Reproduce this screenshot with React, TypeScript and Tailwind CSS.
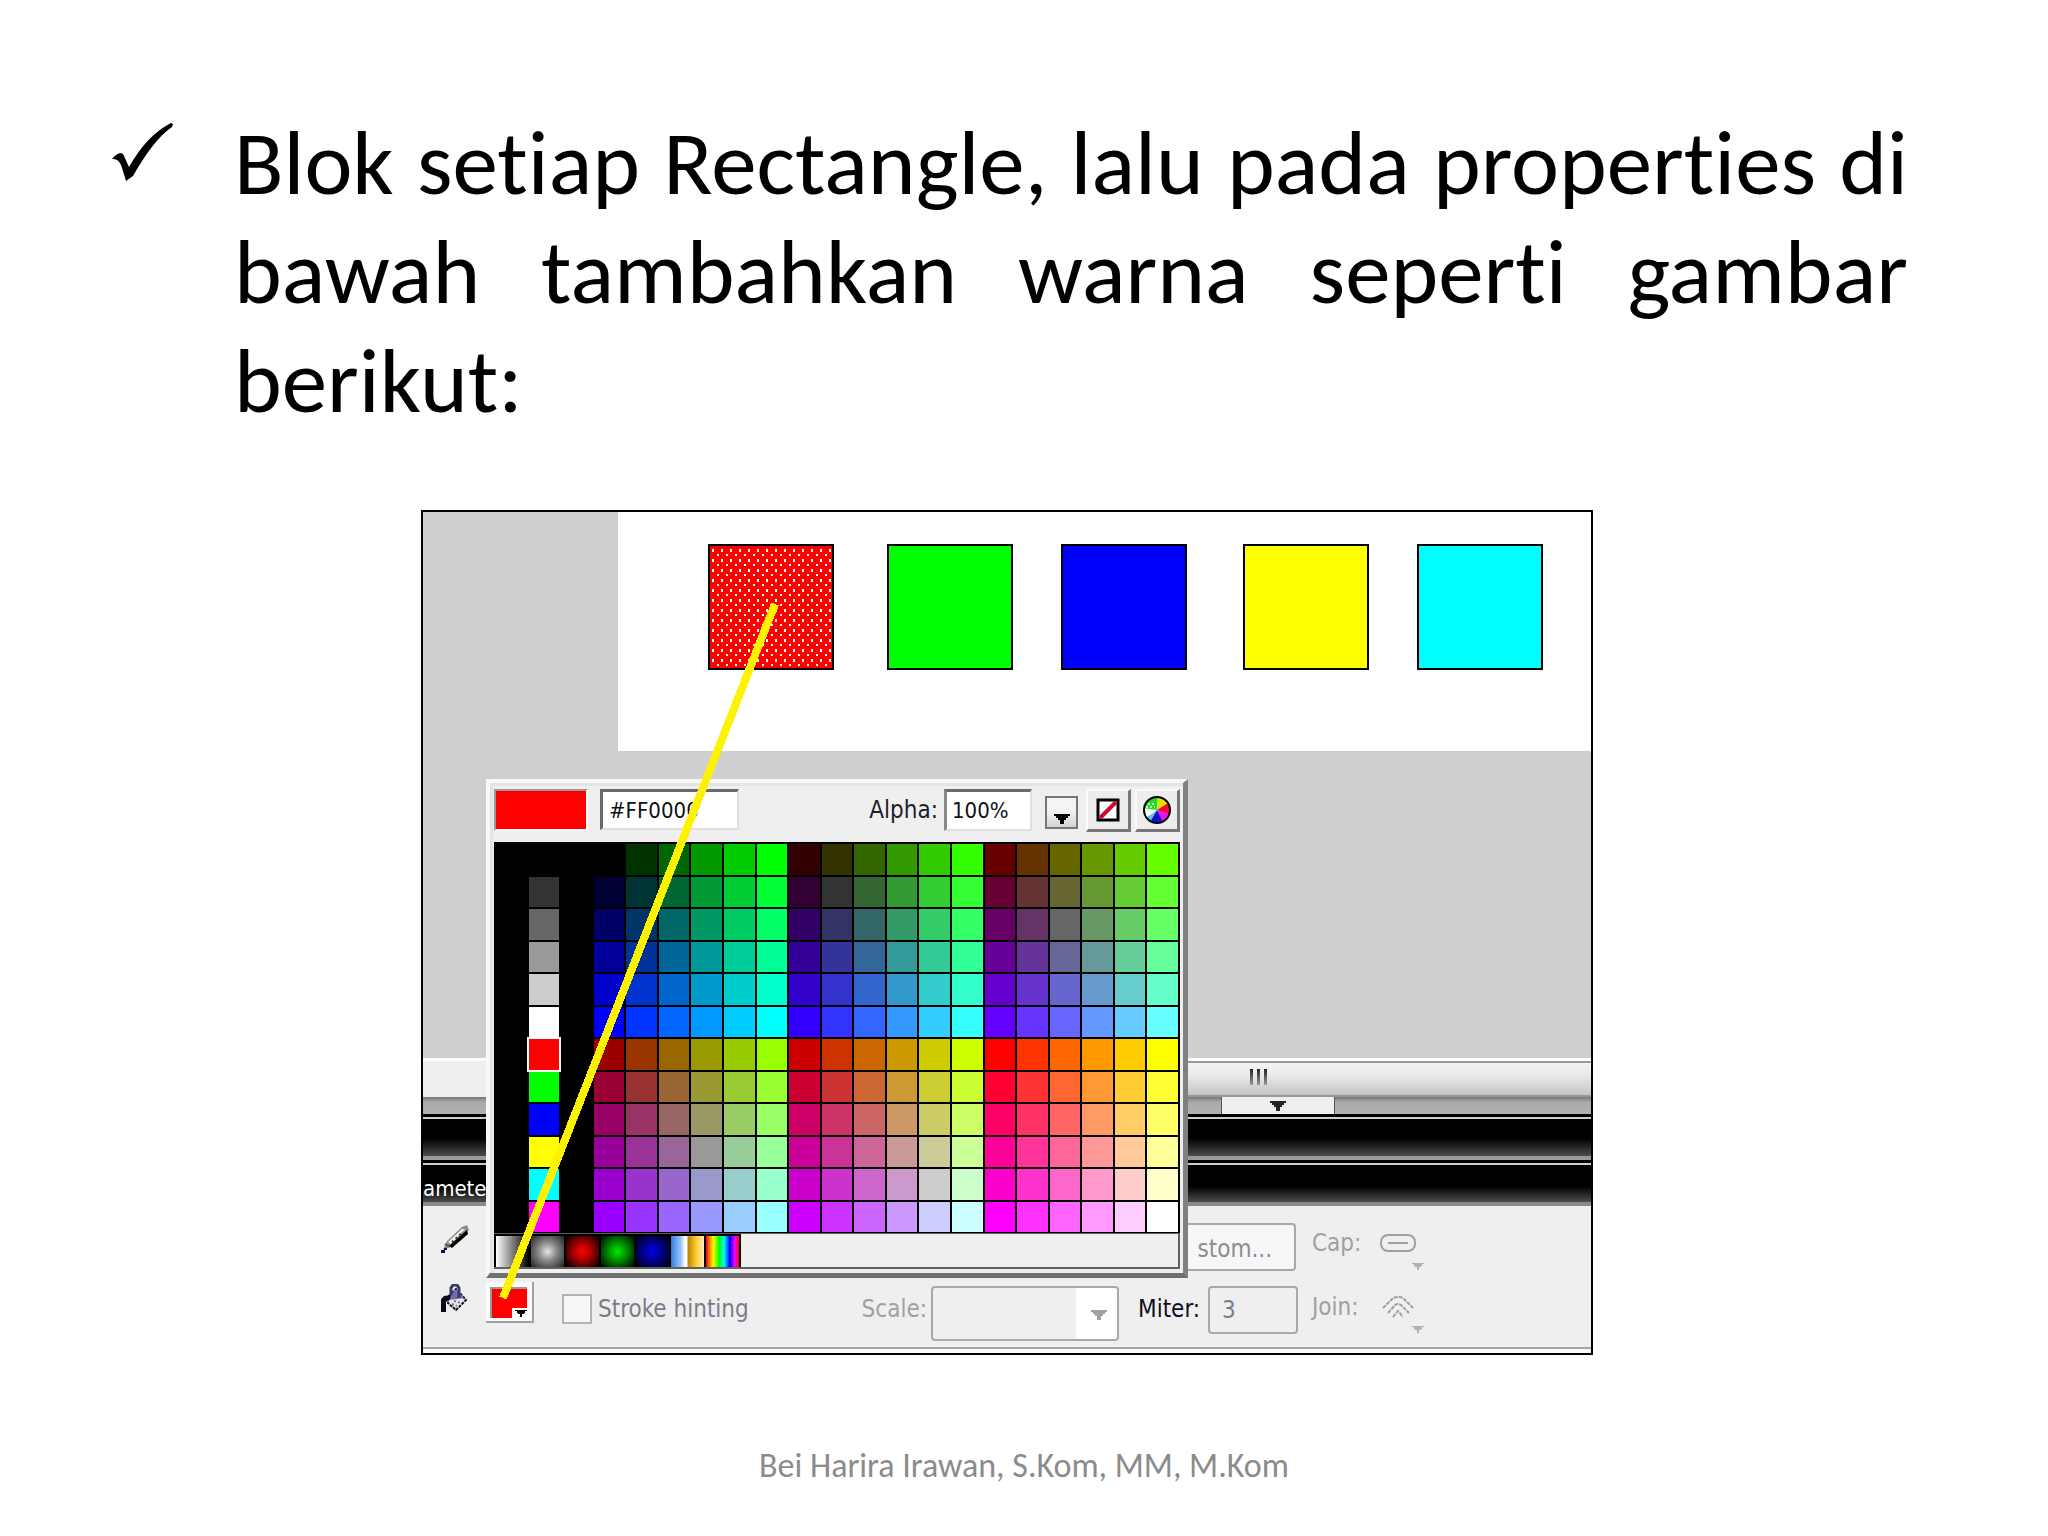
import type { ReactNode } from "react";

const LEVELS = ["00", "33", "66", "99", "CC", "FF"];
const SIDE = [
  "#000000", "#333333", "#666666", "#999999", "#CCCCCC", "#FFFFFF",
  "#FF0000", "#00FF00", "#0000FF", "#FFFF00", "#00FFFF", "#FF00FF",
];

function swatchAt(row: number, col: number): string {
  if (col === 0 || col === 2) return "#000000";
  if (col === 1) return SIDE[row];
  const c = col - 3;
  const red = LEVELS[Math.floor(c / 6) + (row >= 6 ? 3 : 0)];
  return `#${red}${LEVELS[c % 6]}${LEVELS[row % 6]}`;
}

const CELLS = Array.from({ length: 12 * 21 }, (_, i) => {
  const row = Math.floor(i / 21);
  const col = i % 21;
  return { key: i, color: swatchAt(row, col), selected: row === 6 && col === 1 };
});

const GRADIENTS = [
  { name: "White to black", style: "bg-[linear-gradient(to_right,#fff,#000)]" },
  { name: "Grey radial", style: "bg-[radial-gradient(circle,#e4e4e4,#8a8a8a_40%,#222_100%)]" },
  { name: "Red radial", style: "bg-[radial-gradient(circle,#f00,#b40000_35%,#1a0000_90%)]" },
  { name: "Green radial", style: "bg-[radial-gradient(circle,#00e800,#009c00_35%,#001a00_90%)]" },
  { name: "Blue radial", style: "bg-[radial-gradient(circle,#0000e8,#00009c_35%,#00001a_90%)]" },
  { name: "Chrome", style: "bg-[linear-gradient(to_right,#2f7fe8,#9cc4f8_30%,#fff_42%,#fff_48%,#b88600_52%,#ffc828_75%,#fff0c0_100%)]" },
  { name: "Rainbow", style: "bg-[linear-gradient(to_right,#f00,#ff0_22%,#0f0_40%,#0ff_55%,#00f_72%,#f0f_88%,#f00)]" },
];

function CheckMark() {
  return (
    <svg className="mt-[15px] h-[58px] w-[61px] shrink-0" viewBox="0 0 61 58" aria-hidden="true">
      <path d="M0 36Q4 31 8 30Q11 30 12 33L17 44Q35 12 59 0L61 1L60 4Q42 16 21 53L14 58Q11 48 9 42Q6 35 0 36Z" />
    </svg>
  );
}

function Arrow({ className }: { className: string }) {
  return (
    <svg className={className} viewBox="0 0 8 5" shapeRendering="crispEdges" aria-hidden="true">
      <path d="M0 0H8V1H7V2H6V3H5V5H3V3H2V2H1V1H0Z" fill="currentColor" />
    </svg>
  );
}

function PencilIcon() {
  return (
    <svg className="h-7 w-7 shrink-0" viewBox="0 0 28 28" aria-hidden="true">
      <path d="M2 25L6 16L21 2L26 0L28 5L9 22Z" fill="#8c8c84" />
      <path d="M7 17L21 4L24 4L10 19Z" fill="#f2f2ea" />
      <path d="M8 21L26 5L27 9L11 23Z" fill="#000" />
      <path d="M11 17L22 7" stroke="#333" strokeWidth="2" strokeDasharray="2 3" />
      <path d="M0 25H3V23H6V25H4V28H0Z" fill="#111138" />
      <path d="M4 19L9 22" stroke="#555" strokeWidth="2" />
    </svg>
  );
}

function BucketIcon() {
  return (
    <svg className="h-7 w-[26px] shrink-0" viewBox="0 0 26 28" aria-hidden="true">
      <path d="M8 12L15 5L25 16L15 26L7 19Z" fill="#e6e6ee" stroke="#111" strokeWidth="2" strokeDasharray="3 1" />
      <path d="M8 12L15 5L23 14L16 15L8 16Z" fill="#6e6cae" />
      <path d="M10 11V4L12 1H16L18 4V14" fill="none" stroke="#3a3a6a" strokeWidth="3" />
      <path d="M0 28V15L3 12L10 11L9 15L5 18V28Z" fill="#0a0a1c" />
      <path d="M11 20L16 22M13 17L20 19" stroke="#777" strokeWidth="2" strokeDasharray="2 2" />
    </svg>
  );
}

function NoColorIcon() {
  return (
    <svg className="h-6 w-6" viewBox="0 0 24 24" aria-hidden="true">
      <rect x="2" y="2" width="20" height="20" fill="#fff" stroke="#000" strokeWidth="3" />
      <path d="M4 20L20 4" stroke="#cc0a30" strokeWidth="4" />
    </svg>
  );
}

function WheelIcon() {
  return (
    <svg className="h-7 w-7" viewBox="0 0 28 28" aria-hidden="true">
      <clipPath id="wheel"><circle cx="14" cy="14" r="13" /></clipPath>
      <g clipPath="url(#wheel)">
        <rect width="28" height="28" fill="#fff" />
        <path d="M14 14L0 12V0H15Z" fill="#1fe01f" />
        <path d="M14 14L15 0H28V6Z" fill="#e6e000" />
        <path d="M14 14L28 5V19Z" fill="#f00a2a" />
        <path d="M14 14L28 18V28H20Z" fill="#f010f0" />
        <path d="M14 14L21 28H5Z" fill="#1010c8" />
        <path d="M14 14L6 28H0V24Z" fill="#58c8e8" />
        <path d="M3 11H12M5 8H12M4 14H12" stroke="#c8ffc8" strokeWidth="2" strokeDasharray="2 2" />
      </g>
      <circle cx="14" cy="14" r="13" fill="none" stroke="#000" strokeWidth="2" />
    </svg>
  );
}

function CapIcon() {
  return (
    <svg className="h-[18px] w-9" viewBox="0 0 36 18" fill="none" stroke="#a0a0a0" strokeWidth="2" aria-hidden="true">
      <rect x="1" y="1" width="34" height="16" rx="7" />
      <path d="M8 9H28" />
    </svg>
  );
}

function JoinIcon() {
  return (
    <svg className="h-[22px] w-8" viewBox="0 0 32 22" fill="none" stroke="#a0a0a0" strokeWidth="2" strokeDasharray="4 1" aria-hidden="true">
      <path d="M1 12L11 2Q16 0 21 2L31 12" />
      <path d="M6 17L13 9Q16 7 19 9L27 17" />
      <path d="M11 21L16 15L21 21" />
    </svg>
  );
}

function Shape({ className, children }: { className: string; children?: ReactNode }) {
  return <div className={`h-[126px] w-[126px] shrink-0 border-2 border-black ${className}`}>{children}</div>;
}

function Stage() {
  return (
    <div className="h-[546px] bg-[#d0cfd0] pl-[195px]">
      <div className="flex h-[239px] bg-white pt-8 pl-[90px]">
        <Shape className="bg-red-600">
          <svg className="block h-full w-full" viewBox="0 0 122 122" shapeRendering="crispEdges" aria-hidden="true">
            <pattern id="dots" width="9" height="10" patternUnits="userSpaceOnUse">
              <rect width="9" height="10" fill="#f00" />
              <rect x="2" y="3" width="2" height="3" fill="#fff" />
              <rect x="7" y="8" width="2" height="2" fill="#fff" />
            </pattern>
            <rect width="122" height="122" fill="url(#dots)" />
          </svg>
        </Shape>
        <Shape className="ml-[53px] bg-[#00ff00]" />
        <Shape className="ml-12 bg-[#0000ff]" />
        <Shape className="ml-14 bg-[#ffff00]" />
        <Shape className="ml-12 bg-[#00ffff]" />
      </div>
    </div>
  );
}

function ScrollAndTitleBars() {
  return (
    <>
      <div className="flex h-[39px] border-t-[3px] border-white">
        <div className="w-[400px] bg-[#f0eff0]" />
        <div className="flex-1 border-y-2 border-[#9a989a] bg-[linear-gradient(#f4f3f4,#ebeaeb_40%,#dddbdd_60%,#c6c4c6)] pt-[6px] pl-[427px]">
          <div className="flex gap-1">
            <span className="h-4 w-[3px] bg-[linear-gradient(#222,#999)]" />
            <span className="h-4 w-[3px] bg-[linear-gradient(#222,#999)]" />
            <span className="h-4 w-[3px] bg-[linear-gradient(#222,#999)]" />
          </div>
        </div>
      </div>
      <div className="flex h-[17px] bg-[linear-gradient(#777,#aaa8aa_30%,#b2b0b2)] pl-[798px]">
        <button type="button" aria-label="Collapse panel" className="flex w-[114px] items-center justify-center border-x border-[#555] bg-[#f0eff0] text-[#222]">
          <Arrow className="h-[10px] w-[18px]" />
        </button>
      </div>
      <div className="h-[46px] border-t-[3px] border-b-4 border-t-black border-b-[#999] bg-[linear-gradient(#ccc_0,#ccc_2px,#000_2px,#000_55%,#4c4c4c)]" />
      <div className="h-[46px] border-t-[3px] border-b-4 border-t-black border-b-[#8a8a8a] bg-[linear-gradient(#ccc_0,#ccc_2px,#000_2px,#000_60%,#4c4c4c)] pt-3 text-[22px] leading-7 text-white">
        amete
      </div>
    </>
  );
}

function PropertiesPanel() {
  return (
    <div className="h-[147px] border-b-4 border-[#fbfbfb] bg-[#f0eff0]">
      <div className="h-[143px] border-b-2 border-[#a5a3a5] pt-[17px] pl-[18px]">
        <div className="flex h-[59px] items-start">
          <div className="mt-[2px]"><PencilIcon /></div>
          <button type="button" className="ml-[640px] h-12 w-[187px] rounded-[4px] border-2 border-[#a8a8a8] bg-[#f7f7f7] pt-1 pr-[22px] text-right text-[#8c8c94]">
            stom...
          </button>
          <button type="button" className="ml-4 flex h-10 items-center text-[#a0a0a0]">
            <span className="w-[68px] text-left">Cap:</span>
            <CapIcon />
          </button>
          <Arrow className="mt-10 -ml-1 h-[7px] w-3 text-[#b0b0b0]" />
        </div>
        <div className="flex items-start">
          <div className="mt-[2px]"><BucketIcon /></div>
          <button type="button" aria-label="Fill color" className="ml-[19px] flex h-[41px] w-12 items-start border-r-2 border-b-2 border-[#a0a0a0] bg-[#fafafa] pt-[5px] pl-1">
            <span className="flex h-[31px] w-[37px] items-end justify-end border-t-2 border-l-2 border-[#999] bg-[#ff0000]">
              <span className="flex h-[10px] w-[15px] items-center justify-end bg-[#fafafa]">
                <Arrow className="h-[7px] w-3 text-black" />
              </span>
            </span>
          </button>
          <div className="mt-1 flex items-start">
            <label className="ml-7 flex h-[46px] w-[190px] items-center gap-[6px] whitespace-nowrap text-[#7c7c88]">
              <input type="checkbox" className="h-[30px] w-[30px] shrink-0 appearance-none border-2 border-[#b4b2b4] bg-[#f7f7f7]" />
              Stroke hinting
            </label>
            <label htmlFor="scale" className="flex h-[46px] w-[175px] items-center justify-end text-[#a0a0a0]">Scale:</label>
            <div className="relative ml-1">
              <select id="scale" className="block h-[55px] w-[188px] appearance-none rounded-[4px] border-2 border-[#a8a8a8] bg-[linear-gradient(to_right,#f0eff0_143px,#fff_143px)]">
                <option value="" />
              </select>
              <Arrow className="pointer-events-none absolute top-6 right-3 h-[10px] w-4 text-[#a0a0a0]" />
            </div>
            <label htmlFor="miter" className="ml-[19px] flex h-[46px] w-[70px] items-center text-[#101020]">Miter:</label>
            <input id="miter" defaultValue="3" className="h-12 w-[90px] rounded-[4px] border-2 border-[#a8a8a8] bg-[#f0eff0] pl-3 text-[#7c7c88]" />
            <button type="button" className="ml-[14px] flex h-[42px] items-center text-[#a0a0a0]">
              <span className="w-[70px] text-left">Join:</span>
              <JoinIcon />
            </button>
            <Arrow className="mt-10 -ml-[2px] h-[7px] w-3 text-[#b0b0b0]" />
          </div>
        </div>
      </div>
    </div>
  );
}

function RaisedButton({ label, children }: { label: string; children: ReactNode }) {
  return (
    <button
      type="button"
      aria-label={label}
      className="flex h-[43px] w-[45px] items-center justify-center border-t-2 border-r-[3px] border-b-[3px] border-l-2 border-t-[#fafafa] border-r-[#777] border-b-[#777] border-l-[#fafafa] bg-[#eeedee]"
    >
      {children}
    </button>
  );
}

function ColorPopup() {
  return (
    <div className="absolute top-[267px] left-[63px] w-[702px] border-t-4 border-r-[5px] border-b-[5px] border-l-4 border-t-[#f8f8f8] border-r-[#808080] border-b-[#707070] border-l-[#f8f8f8] bg-[#f0eff0] pt-[6px] pr-[3px] pb-1 pl-1 shadow-[inset_3px_3px_0_#e4e4e4]">
      <div className="flex h-[53px] items-start">
        <div className="h-[42px] w-[94px] border-2 border-t-[#999] border-r-white border-b-white border-l-[#999] bg-[#ff0000]" />
        <input
          aria-label="Hex color"
          defaultValue="#FF0000"
          className="ml-3 h-[41px] w-[139px] border-t-[3px] border-r-2 border-b-2 border-l-[3px] border-t-[#6a6a6a] border-r-[#e0e0e0] border-b-[#e0e0e0] border-l-[#6a6a6a] bg-white pl-[6px] text-[22px] text-[#101018]"
        />
        <label htmlFor="alpha" className="ml-auto flex h-[42px] items-center text-[#202028]">Alpha:</label>
        <input
          id="alpha"
          defaultValue="100%"
          className="ml-[6px] h-[42px] w-[88px] border-t-[3px] border-r-2 border-b-2 border-l-[3px] border-t-[#6a6a6a] border-r-[#e0e0e0] border-b-[#e0e0e0] border-l-[#8a8a8a] bg-white pl-[5px] text-[22px] text-[#101018]"
        />
        <button
          type="button"
          aria-label="Alpha slider"
          className="mt-[7px] ml-[13px] flex h-[33px] w-[33px] items-end justify-center border-2 border-[#777] bg-[linear-gradient(#f4f4f4_40%,#d4d4d4)] pb-[3px] text-black"
        >
          <Arrow className="h-[10px] w-[18px]" />
        </button>
        <div className="ml-2 flex gap-1">
          <RaisedButton label="No color"><NoColorIcon /></RaisedButton>
          <RaisedButton label="Color picker"><WheelIcon /></RaisedButton>
        </div>
      </div>
      <div className="grid h-[391px] grid-cols-[repeat(21,minmax(0,1fr))] grid-rows-[repeat(12,minmax(0,1fr))] gap-[2px] bg-black px-[2px] pt-[2px] pb-px">
        {CELLS.map((cell) => (
          <button
            key={cell.key}
            type="button"
            aria-label={cell.color}
            className={cell.selected ? "relative outline-2 outline-white" : ""}
            style={{ backgroundColor: cell.color }}
          />
        ))}
      </div>
      <div className="flex h-9 border-t border-r-2 border-b-2 border-[#606060]">
        <div className="flex w-[247px] gap-[2px] bg-black p-[2px] pb-0">
          {GRADIENTS.map((g) => (
            <button key={g.name} type="button" aria-label={g.name} className={`flex-1 ${g.style}`} />
          ))}
        </div>
      </div>
    </div>
  );
}

export default function App() {
  return (
    <main className="min-h-screen bg-white pt-[108px] font-[Carlito,Calibri,Lato,sans-serif] text-black">
      <ul className="pr-[140px] pl-28">
        <li className="flex items-start gap-[61px]">
          <CheckMark />
          <p className="flex-1 text-justify text-[91px] leading-[109px] [font-variant-ligatures:none]">
            Blok setiap Rectangle, lalu pada properties di bawah tambahkan warna seperti gambar berikut:
          </p>
        </li>
      </ul>
      <div className="mt-[75px] flex justify-center pr-[34px]">
        <figure className="relative w-full max-w-[1172px] overflow-hidden border-2 border-black font-['DejaVu_Sans_Condensed','DejaVu_Sans',sans-serif] text-[24px] leading-7">
          <Stage />
          <ScrollAndTitleBars />
          <PropertiesPanel />
          <ColorPopup />
          <svg className="pointer-events-none absolute inset-0 h-full w-full" shapeRendering="crispEdges" aria-hidden="true">
            <line x1="352" y1="92" x2="80" y2="786" stroke="#fff200" strokeWidth="8" />
          </svg>
        </figure>
      </div>
      <footer className="mt-[91px] pb-10 text-center text-[34px] leading-10 text-[#8b8b8b] [font-variant-ligatures:none]">
        Bei Harira Irawan, S.Kom, MM, M.Kom
      </footer>
    </main>
  );
}
